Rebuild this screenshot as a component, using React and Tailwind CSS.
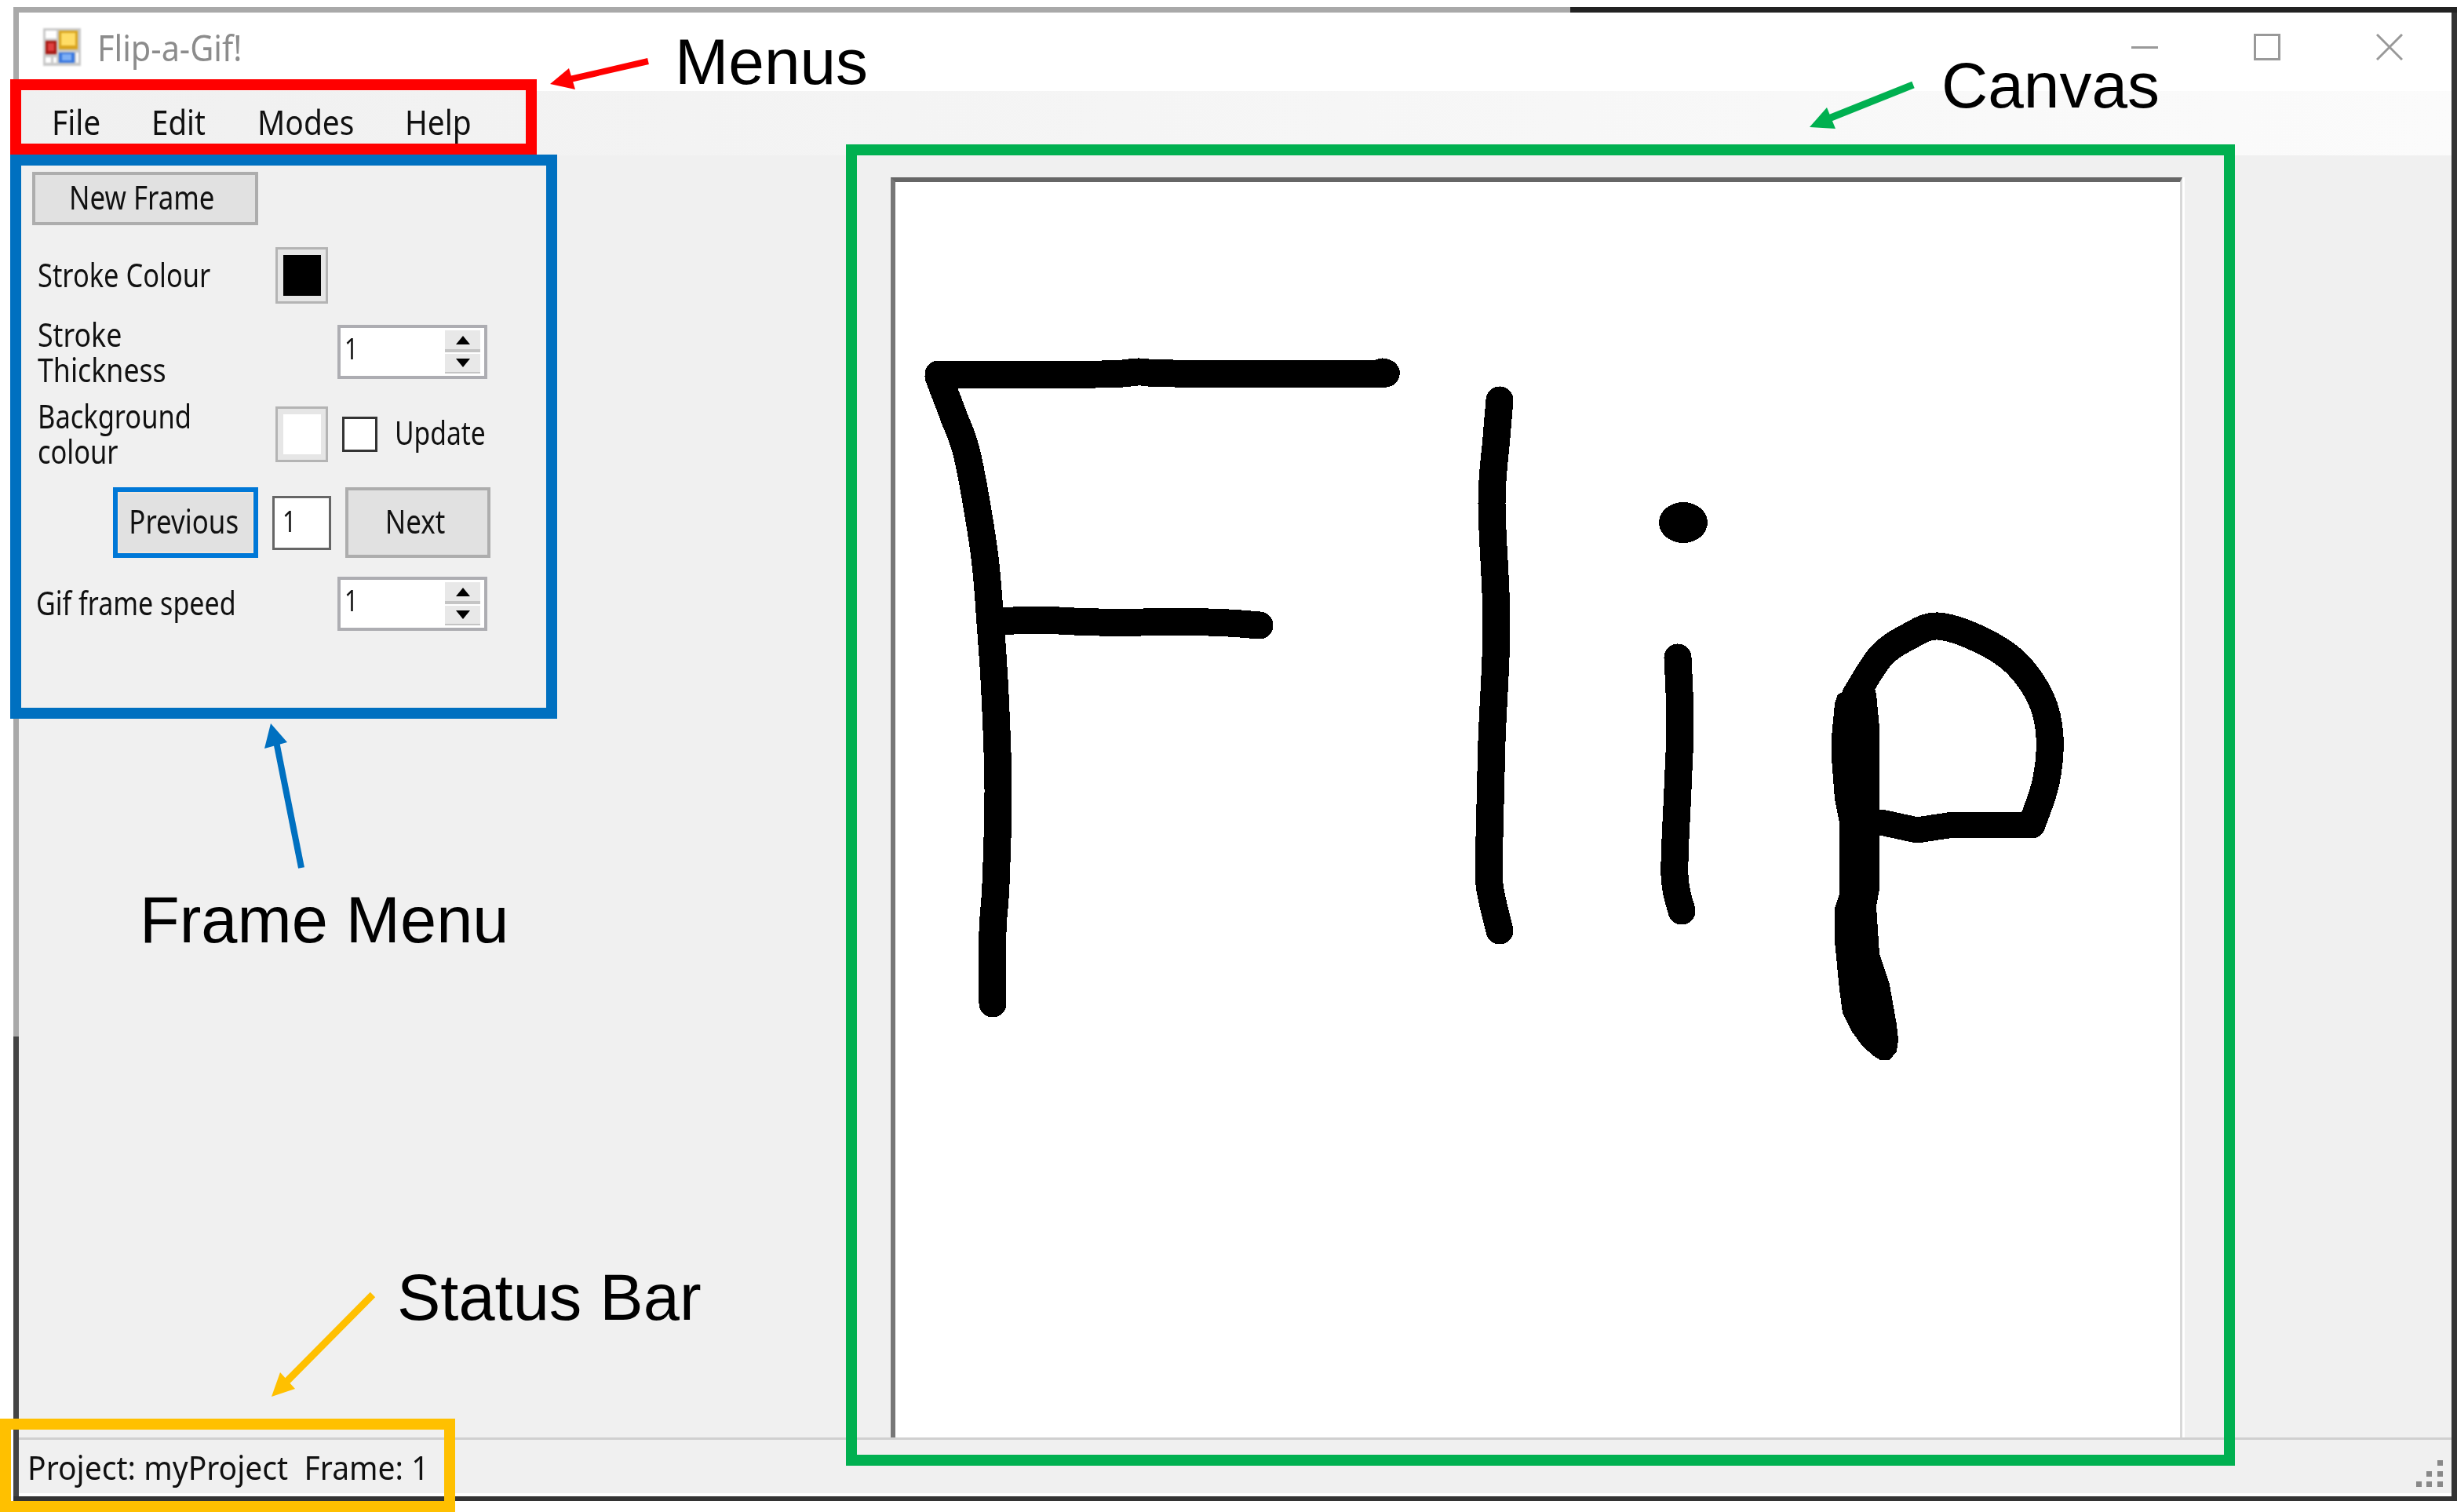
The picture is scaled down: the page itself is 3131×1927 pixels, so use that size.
const ui = "[font-family:'Noto_Sans',sans-serif] text-[#111]";
const arial = "[font-family:'Liberation_Sans',Arial,sans-serif] leading-none text-black";

function Txt({ children, className = "scale-x-[0.82] text-[42px] -mt-[4px]" }) {
  return (
    <span className={"block origin-left whitespace-pre leading-[45px] " + ui + " " + className}>
      {children}
    </span>
  );
}

function WinButton({ children, className = "" }) {
  return (
    <div className={"flex items-center justify-center bg-[#e1e1e1] " + className}>
      <span className={"-mt-[4px] block whitespace-pre scale-x-[0.83] text-[42px] leading-none " + ui}>{children}</span>
    </div>
  );
}

function Swatch({ fill }) {
  return (
    <div className="flex h-full w-[67px] shrink-0 items-center justify-center border-[3px] border-[#b4b4b4] bg-[#e6e6e6]">
      <div className={"h-[calc(100%-14px)] w-[48px] " + fill} />
    </div>
  );
}

function Spinner() {
  return (
    <div className="flex h-[69px] w-[191px] items-center border-[4px] border-[#adadb2] bg-white pl-[5px]">
      <span className={"-mt-[12px] block flex-1 origin-left scale-x-[0.8] text-[38px] leading-[38px] " + ui}>1</span>
      <div className="mr-[5px] flex h-[55px] w-[45px] flex-col justify-between">
        <div className="flex h-[28px] items-center justify-center border-b-[4px] border-[#c4c4c4] bg-[#e8e8e8]">
          <svg width="18" height="11" viewBox="0 0 18 11"><path d="M9 0 L18 11 L0 11 Z" fill="#000" /></svg>
        </div>
        <div className="flex h-[25px] items-center justify-center border-b-[2px] border-[#c4c4c4] bg-[#e8e8e8]">
          <svg width="18" height="11" viewBox="0 0 18 11"><path d="M0 0 L18 0 L9 11 Z" fill="#000" /></svg>
        </div>
      </div>
    </div>
  );
}

function AppIcon() {
  return (
    <svg width="48" height="48" viewBox="0 0 48 48" className="shrink-0 blur-[1px]">
      <rect x="0" y="0" width="48" height="48" fill="#c9c9c9" />
      <rect x="3" y="3" width="14" height="10" fill="#fff" />
      <rect x="20" y="3" width="24" height="24" fill="#d9a520" />
      <rect x="23" y="6" width="18" height="16" fill="#ffdd66" />
      <rect x="3" y="16" width="14" height="17" fill="#a81a14" />
      <rect x="6" y="19" width="8" height="10" fill="#e04040" />
      <rect x="20" y="31" width="20" height="13" fill="#3a78e0" />
      <rect x="24" y="33" width="12" height="8" fill="#7fb0f5" />
      <rect x="3" y="37" width="7" height="7" fill="#fff" />
      <rect x="13" y="37" width="4" height="7" fill="#fff" />
      <rect x="42" y="31" width="3" height="13" fill="#fff" />
    </svg>
  );
}

function smooth(p) {
  let d = `M${p[0][0]} ${p[0][1]}`;
  for (let i = 0; i < p.length - 1; i++) {
    const a = p[Math.max(i - 1, 0)];
    const b = p[i];
    const c = p[i + 1];
    const e = p[Math.min(i + 2, p.length - 1)];
    d += ` C${b[0] + (c[0] - a[0]) / 6} ${b[1] + (c[1] - a[1]) / 6} ${c[0] - (e[0] - b[0]) / 6} ${c[1] - (e[1] - b[1]) / 6} ${c[0]} ${c[1]}`;
  }
  return d;
}

const strokes = [
  [[1196, 477], [1404, 477], [1450, 474], [1495, 476], [1740, 477], [1762, 474]],
  [[1196, 480], [1215, 530], [1233, 582], [1254, 703], [1262, 794], [1268, 885], [1272, 1006], [1269, 1127], [1265, 1188], [1265, 1279]],
  [[1262, 793], [1320, 790], [1400, 793], [1540, 793], [1605, 797]],
  [[1911, 510], [1907, 558], [1901, 642], [1907, 794], [1901, 945], [1898, 1067], [1898, 1127], [1911, 1186]],
  [[2138, 838], [2141, 921], [2138, 1006], [2134, 1115], [2143, 1161]],
  [[2365, 885], [2397, 836], [2431, 812], [2469, 798], [2523, 815], [2569, 845], [2601, 891], [2612, 939], [2607, 997], [2589, 1051]],
];

function Drawing() {
  return (
    <svg viewBox="1141 232 1637 1600" className="h-full w-full" shapeRendering="crispEdges">
      <g fill="none" stroke="#000" strokeWidth="35" strokeLinecap="round" strokeLinejoin="round">
        {strokes.map((s, i) => (
          <path key={i} d={smooth(s)} />
        ))}
        <path d="M2589 1051 L2489 1051 L2443 1058 L2397 1048" strokeWidth="33" />
      </g>
      <ellipse cx="2145" cy="666" rx="31" ry="26" fill="#000" />
      <path
        d="M2386 861 L2342 885 L2338 897 L2334 939 L2334 967 L2338 1018 L2344 1048 L2344 1139 L2338 1158 L2338 1200 L2344 1261 L2348 1291 L2360 1315 L2374 1334 L2388 1346 L2396 1351 L2408 1351 L2417 1340 L2419 1325 L2417 1306 L2408 1255 L2395 1215 L2391 1155 L2395 1133 L2395 927 L2391 885 L2388 873 Z"
        fill="#000"
      />
    </svg>
  );
}

function Arrows() {
  return (
    <svg viewBox="0 0 3131 1927" className="pointer-events-none absolute left-0 top-0 h-[1927px] w-[3131px]">
      <line x1="826" y1="78" x2="722" y2="102" stroke="#ff0000" strokeWidth="8" />
      <path d="M701 107 L725 87 L733 114 Z" fill="#ff0000" />
      <line x1="384" y1="1106" x2="352" y2="945" stroke="#0070c0" strokeWidth="8" />
      <path d="M345 922 L337 954 L366 946 Z" fill="#0070c0" />
      <line x1="475" y1="1650" x2="366" y2="1760" stroke="#ffc000" strokeWidth="9" />
      <path d="M346 1780 L357 1749 L376 1770 Z" fill="#ffc000" />
      <line x1="2438" y1="108" x2="2328" y2="152" stroke="#00b050" strokeWidth="9" />
      <path d="M2306 162 L2328 137 L2339 164 Z" fill="#00b050" />
    </svg>
  );
}

export default function App() {
  return (
    <div className="relative h-[1927px] w-[3131px] overflow-hidden bg-white pt-[9px]">
      {/* window */}
      <div className="ml-[17px] flex h-[1904px] w-[3114px] flex-col">
        <div className="h-[7px] shrink-0 bg-[linear-gradient(90deg,#a9a9a9_63.7%,#222_63.7%)]" />
        <div className="flex min-h-0 flex-1">
          <div className="w-[7px] shrink-0 bg-[linear-gradient(180deg,#a9a9a9_69%,#444_69%)]" />
          <div className="flex min-w-0 flex-1 flex-col bg-[#f0f0f0]">
            {/* title bar */}
            <div className="flex h-[100px] shrink-0 items-center bg-white pb-[12px] pl-[31px] pr-[62px]">
              <AppIcon />
              <span className="ml-[21px] block origin-left scale-x-[0.9] text-[46px] leading-none text-[#8c8c8c] [font-family:'Noto_Sans',sans-serif]">Flip-a-Gif!</span>
              <div className="ml-auto flex items-center gap-[122px]">
                <div className="h-[3px] w-[34px] bg-[#999]" />
                <div className="h-[34px] w-[34px] border-[3px] border-[#999]" />
                <svg width="34" height="34" viewBox="0 0 34 34"><path d="M1 1 L33 33 M33 1 L1 33" stroke="#999" strokeWidth="3" /></svg>
              </div>
            </div>
            {/* menu strip */}
            <div className="flex h-[82px] shrink-0 items-center bg-[linear-gradient(90deg,#f0f0f0,#fbfbfb)] pb-[4px] pl-[42px]">
              <div className="w-[127px]"><Txt className="scale-x-[0.885] text-[44px]">File</Txt></div>
              <div className="w-[135px]"><Txt className="scale-x-[0.875] text-[44px]">Edit</Txt></div>
              <div className="w-[188px]"><Txt className="scale-x-[0.885] text-[44px]">Modes</Txt></div>
              <div><Txt className="scale-x-[0.885] text-[44px]">Help</Txt></div>
            </div>
            {/* body */}
            <div className="flex min-h-0 flex-1">
              <div className="w-[1111px] shrink-0 pl-[17px] pt-[21px]">
                <WinButton className="h-[68px] w-[288px] border-[4px] border-[#adadad] pr-[8px]">New Frame</WinButton>
                <div className="mt-[28px] flex h-[72px] items-center pl-[7px]">
                  <div className="w-[303px]"><Txt>Stroke Colour</Txt></div>
                  <Swatch fill="bg-black" />
                </div>
                <div className="mt-[27px] flex h-[69px] items-center pl-[7px]">
                  <div className="w-[382px]"><Txt className="-mt-[2px] scale-x-[0.85] text-[42px]">{"Stroke\nThickness"}</Txt></div>
                  <Spinner />
                </div>
                <div className="mt-[35px] flex h-[71px] items-center pl-[7px]">
                  <div className="w-[303px]"><Txt>{"Background\ncolour"}</Txt></div>
                  <Swatch fill="bg-white" />
                  <div className="ml-[18px] h-[45px] w-[45px] border-[3px] border-[#333] bg-white" />
                  <div className="ml-[22px]"><Txt className="-mt-[6px] scale-x-[0.8] text-[42px]">Update</Txt></div>
                </div>
                <div className="mt-[32px] flex h-[90px] items-center pl-[103px]">
                  <WinButton className="h-[90px] w-[185px] border-[6px] border-[#0078d7] pr-[4px] outline outline-offset-[-8px] outline-[2px] outline-[#f0e6dc]">Previous</WinButton>
                  <div className="ml-[18px] flex h-[69px] w-[75px] items-center border-[3px] border-[#666] bg-white pl-[10px]">
                    <span className={"-mt-[6px] block origin-left scale-x-[0.8] text-[38px] leading-[38px] " + ui}>1</span>
                  </div>
                  <WinButton className="ml-[18px] h-[90px] w-[185px] border-[4px] border-[#adadad] pr-[6px]">Next</WinButton>
                </div>
                <div className="mt-[24px] flex h-[69px] items-center pl-[5px]">
                  <div className="w-[384px]"><Txt className="-mt-[4px] scale-x-[0.81] text-[42px]">Gif frame speed</Txt></div>
                  <Spinner />
                </div>
              </div>
              <div className="mt-[28px] w-[1646px] shrink-0 border-l-[6px] border-r-[3px] border-t-[6px] border-l-[#777] border-r-[#d8d8d8] border-t-[#666] bg-white shadow-[3px_0_0_#fff]">
                <Drawing />
              </div>
            </div>
            {/* status bar */}
            <div className="flex h-[71px] shrink-0 items-center border-t-[3px] border-[#d0d0d0] pl-[11px] pr-[11px]">
              <Txt className="scale-x-[0.93] text-[42px]">{"Project: myProject  Frame: 1"}</Txt>
              <svg width="34" height="34" viewBox="0 0 34 34" className="ml-auto mt-[18px]">
                <g fill="#888">
                  <rect x="27" y="0" width="7" height="7" />
                  <rect x="13" y="14" width="7" height="7" />
                  <rect x="27" y="14" width="7" height="7" />
                  <rect x="0" y="27" width="7" height="7" />
                  <rect x="13" y="27" width="7" height="7" />
                  <rect x="27" y="27" width="7" height="7" />
                </g>
              </svg>
            </div>
            <div className="h-[4px] shrink-0 bg-white" />
          </div>
          <div className="w-[7px] shrink-0 bg-[#333]" />
        </div>
        <div className="h-[6px] shrink-0 bg-[#333]" />
      </div>

      {/* annotation frames */}
      <div className="pointer-events-none absolute left-[13px] top-[101px] h-[96px] w-[671px] border-[14px] border-[#ff0000]" />
      <div className="pointer-events-none absolute left-[13px] top-[197px] h-[719px] w-[697px] border-[14px] border-[#0070c0]" />
      <div className="pointer-events-none absolute left-[1078px] top-[184px] h-[1684px] w-[1770px] border-[14px] border-[#00b050]" />
      <div className="pointer-events-none absolute left-0 top-[1808px] h-[119px] w-[580px] border-[14px] border-[#ffc000]" />
      <Arrows />

      {/* annotation labels */}
      <span className={"absolute left-[860px] top-[38px] text-[82px] " + arial}>Menus</span>
      <span className={"absolute left-[2474px] top-[68px] text-[82px] " + arial}>Canvas</span>
      <span className={"absolute left-[178px] top-[1131px] text-[83px] " + arial}>Frame Menu</span>
      <span className={"absolute left-[506px] top-[1612px] text-[83px] " + arial}>Status Bar</span>
    </div>
  );
}
